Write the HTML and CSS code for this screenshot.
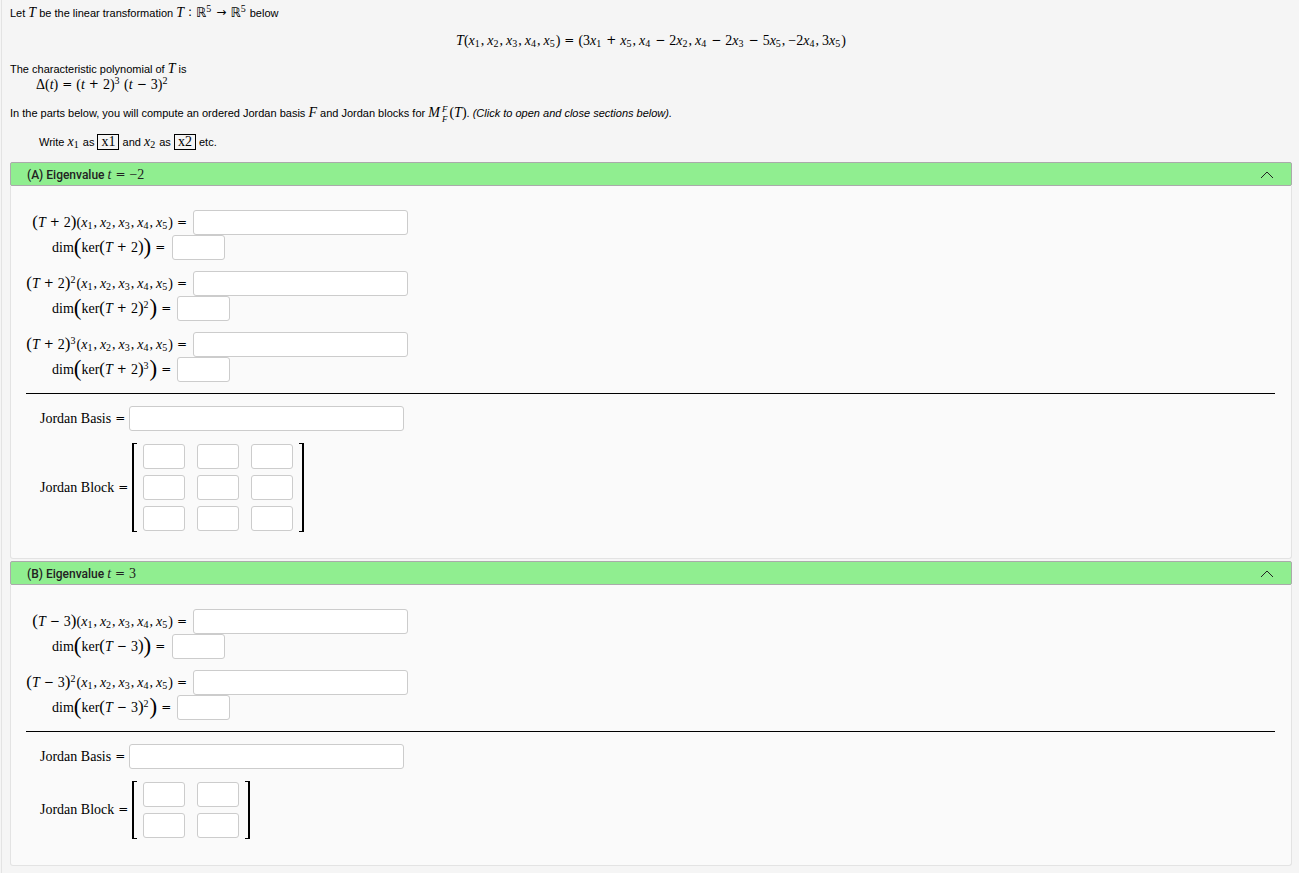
FILE: index.html
```html
<!DOCTYPE html>
<html lang="en">
<head>
    <meta charset="UTF-8">
    <meta name="viewport" content="width=device-width, initial-scale=1.0">
    <title>Jordan basis</title>
    <link rel="stylesheet" href="styles.css">
</head>
<body>
    <div class="problem">
        <p>Let <span class="math"><i>T</i></span> be the linear transformation <span class="math"><i>T</i><b>:</b><span class="bb">ℝ</span><sup>5</sup><b>→</b><span class="bb">ℝ</span><sup>5</sup></span> below</p>
        <p class="display"><span class="math"><i>T</i>(<i>x</i><sub>1</sub><u>,</u><i>x</i><sub>2</sub><u>,</u><i>x</i><sub>3</sub><u>,</u><i>x</i><sub>4</sub><u>,</u><i>x</i><sub>5</sub>)<b>=</b>(3<i>x</i><sub>1</sub><b>+</b><i>x</i><sub>5</sub><u>,</u><i>x</i><sub>4</sub><b>−</b>2<i>x</i><sub>2</sub><u>,</u><i>x</i><sub>4</sub><b>−</b>2<i>x</i><sub>3</sub><b>−</b>5<i>x</i><sub>5</sub><u>,</u>−2<i>x</i><sub>4</sub><u>,</u>3<i>x</i><sub>5</sub>)</span></p>
        <p>The characteristic polynomial of <span class="math"><i>T</i></span> is</p>
        <p class="poly"><span class="math">Δ(<i>t</i>)<b>=</b>(<i>t</i><b>+</b>2)<sup>3</sup> (<i>t</i><b>−</b>3)<sup>2</sup></span></p>
        <p class="parts">In the parts below, you will compute an ordered Jordan basis <span class="math"><i>F</i></span> and Jordan blocks for <span class="math"><i>M</i><span class="supsub"><i>F</i><i>F</i></span>(<i>T</i>)</span>. <em>(Click to open and close sections below).</em></p>
        <p class="hint">Write <span class="math"><i>x</i><sub>1</sub></span> as <span class="math boxed">x1</span> and <span class="math"><i>x</i><sub>2</sub></span> as <span class="math boxed">x2</span> etc.</p>

        <details open>
            <summary>
                <span>(A) Eigenvalue <span class="math"><i>t</i><b>=</b>−2</span></span>
                <svg class="arrow" viewBox="0 0 14 8"><path d="M1 7 L7 1 L13 7"/></svg>
            </summary>
            <div class="panel">
                <div class="group">
                    <div class="row">
                        <label class="math map" for="a1"><span class="big">(</span><i>T</i><b>+</b>2<span class="big">)</span>(<i>x</i><sub>1</sub><u>,</u><i>x</i><sub>2</sub><u>,</u><i>x</i><sub>3</sub><u>,</u><i>x</i><sub>4</sub><u>,</u><i>x</i><sub>5</sub>)<b>=</b></label>
                        <input type="text" id="a1" class="long">
                    </div>
                    <div class="row">
                        <label class="math dim" for="a1dim">dim<span class="huge">(</span>ker<span class="big">(</span><i>T</i><b>+</b>2<span class="big">)</span><span class="huge">)</span><b>=</b></label>
                        <input type="text" id="a1dim" class="short">
                    </div>
                </div>
                <div class="group">
                    <div class="row">
                        <label class="math map" for="a2"><span class="big">(</span><i>T</i><b>+</b>2<span class="big">)</span><sup>2</sup>(<i>x</i><sub>1</sub><u>,</u><i>x</i><sub>2</sub><u>,</u><i>x</i><sub>3</sub><u>,</u><i>x</i><sub>4</sub><u>,</u><i>x</i><sub>5</sub>)<b>=</b></label>
                        <input type="text" id="a2" class="long">
                    </div>
                    <div class="row">
                        <label class="math dim power" for="a2dim">dim<span class="huge">(</span>ker<span class="big">(</span><i>T</i><b>+</b>2<span class="big">)</span><sup>2</sup><span class="huge">)</span><b>=</b></label>
                        <input type="text" id="a2dim" class="short">
                    </div>
                </div>
                <div class="group">
                    <div class="row">
                        <label class="math map" for="a3"><span class="big">(</span><i>T</i><b>+</b>2<span class="big">)</span><sup>3</sup>(<i>x</i><sub>1</sub><u>,</u><i>x</i><sub>2</sub><u>,</u><i>x</i><sub>3</sub><u>,</u><i>x</i><sub>4</sub><u>,</u><i>x</i><sub>5</sub>)<b>=</b></label>
                        <input type="text" id="a3" class="long">
                    </div>
                    <div class="row">
                        <label class="math dim power" for="a3dim">dim<span class="huge">(</span>ker<span class="big">(</span><i>T</i><b>+</b>2<span class="big">)</span><sup>3</sup><span class="huge">)</span><b>=</b></label>
                        <input type="text" id="a3dim" class="short">
                    </div>
                </div>
                <hr>
                <div class="answer">
                    <label class="math" for="abasis">Jordan Basis<b>=</b></label>
                    <input type="text" id="abasis" class="basis">
                </div>
                <div class="answer">
                    <label class="math" for="a11">Jordan Block<b>=</b></label>
                    <div class="matrix">
                        <div class="cells three">
                            <input type="text" id="a11">
                            <input type="text" aria-label="Row 1 column 2">
                            <input type="text" aria-label="Row 1 column 3">
                            <input type="text" aria-label="Row 2 column 1">
                            <input type="text" aria-label="Row 2 column 2">
                            <input type="text" aria-label="Row 2 column 3">
                            <input type="text" aria-label="Row 3 column 1">
                            <input type="text" aria-label="Row 3 column 2">
                            <input type="text" aria-label="Row 3 column 3">
                        </div>
                    </div>
                </div>
            </div>
        </details>

        <details open>
            <summary>
                <span>(B) Eigenvalue <span class="math"><i>t</i><b>=</b>3</span></span>
                <svg class="arrow" viewBox="0 0 14 8"><path d="M1 7 L7 1 L13 7"/></svg>
            </summary>
            <div class="panel">
                <div class="group">
                    <div class="row">
                        <label class="math map" for="b1"><span class="big">(</span><i>T</i><b>−</b>3<span class="big">)</span>(<i>x</i><sub>1</sub><u>,</u><i>x</i><sub>2</sub><u>,</u><i>x</i><sub>3</sub><u>,</u><i>x</i><sub>4</sub><u>,</u><i>x</i><sub>5</sub>)<b>=</b></label>
                        <input type="text" id="b1" class="long">
                    </div>
                    <div class="row">
                        <label class="math dim" for="b1dim">dim<span class="huge">(</span>ker<span class="big">(</span><i>T</i><b>−</b>3<span class="big">)</span><span class="huge">)</span><b>=</b></label>
                        <input type="text" id="b1dim" class="short">
                    </div>
                </div>
                <div class="group">
                    <div class="row">
                        <label class="math map" for="b2"><span class="big">(</span><i>T</i><b>−</b>3<span class="big">)</span><sup>2</sup>(<i>x</i><sub>1</sub><u>,</u><i>x</i><sub>2</sub><u>,</u><i>x</i><sub>3</sub><u>,</u><i>x</i><sub>4</sub><u>,</u><i>x</i><sub>5</sub>)<b>=</b></label>
                        <input type="text" id="b2" class="long">
                    </div>
                    <div class="row">
                        <label class="math dim power" for="b2dim">dim<span class="huge">(</span>ker<span class="big">(</span><i>T</i><b>−</b>3<span class="big">)</span><sup>2</sup><span class="huge">)</span><b>=</b></label>
                        <input type="text" id="b2dim" class="short">
                    </div>
                </div>
                <hr>
                <div class="answer">
                    <label class="math" for="bbasis">Jordan Basis<b>=</b></label>
                    <input type="text" id="bbasis" class="basis">
                </div>
                <div class="answer">
                    <label class="math" for="b11">Jordan Block<b>=</b></label>
                    <div class="matrix">
                        <div class="cells two">
                            <input type="text" id="b11">
                            <input type="text" aria-label="Row 1 column 2">
                            <input type="text" aria-label="Row 2 column 1">
                            <input type="text" aria-label="Row 2 column 2">
                        </div>
                    </div>
                </div>
            </div>
        </details>
    </div>
</body>
</html>
```
FILE: styles.css
```css
*, *::before, *::after {
    box-sizing: border-box;
}
body {
    margin: 0;
    background-color: #f5f5f5;
    color: #000;
    font-family: "Liberation Sans", Arial, sans-serif;
    font-size: 11px;
    line-height: 16px;
}
.problem {
    margin-left: 1px;
    padding: 5px 7px 5px 8px;
    border-left: 1px solid #e3e3e3;
}
p {
    margin: 0;
}
.display {
    margin: 12px 0;
    text-align: center;
}
.poly {
    padding-left: 26px;
}
.parts {
    margin-top: 12px;
}
.hint {
    margin: 13px 0 12px;
    padding-left: 29px;
}

/* math */
.math {
    font-family: "Liberation Serif", "Times New Roman", serif;
    font-size: 14px;
    font-style: normal;
    font-weight: normal;
    white-space: nowrap;
}
.math b {
    margin: 0 4px;
    font-family: "DejaVu Sans", sans-serif;
    font-size: 12px;
    font-weight: normal;
    line-height: 0;
    vertical-align: 1px;
}
.math u {
    margin-right: 3px;
    text-decoration: none;
}
.math sub, .math sup {
    margin-right: 1px;
    font-size: 10px;
    line-height: 0;
}
.math sub {
    vertical-align: -2px;
}
.math sup {
    vertical-align: 5px;
}
.bb {
    font-family: "DejaVu Sans", sans-serif;
    font-size: 13px;
    line-height: 0;
}
.big {
    font-size: 17px;
    line-height: 0;
}
.huge {
    font-size: 23px;
    line-height: 0;
    vertical-align: -2px;
}
.supsub {
    display: inline-flex;
    flex-direction: column;
    margin: -4px 2px;
    font-size: 9px;
    line-height: 10px;
    vertical-align: middle;
}
.boxed {
    display: inline-block;
    padding: 0 3px;
    border: 1px solid #000;
    line-height: 14px;
}

/* sections */
details {
    margin-bottom: 2px;
}
summary {
    display: flex;
    justify-content: space-between;
    align-items: center;
    height: 24px;
    padding: 1px 17px 0 16px;
    border: 1px solid #aaa;
    border-radius: 2px;
    background-color: #90ee90;
    color: #222;
    font-family: Roboto, "Liberation Sans", sans-serif;
    font-size: 12px;
    font-weight: 500;
    cursor: pointer;
}
.arrow {
    width: 14px;
    height: 8px;
    fill: none;
    stroke: #222;
}
.panel {
    padding: 24px 16px 26px 15px;
    border: 1px solid #e3e3e3;
    border-top: none;
    border-radius: 0 0 3px 3px;
    background-color: #fafafa;
}
.group {
    margin-bottom: 11px;
}
.row {
    display: flex;
    align-items: center;
    gap: 6px;
}
.map {
    width: 161px;
    text-align: right;
}
.dim {
    width: 114px;
    margin-left: 26px;
}
.power {
    width: 119px;
}
label.math b:last-child {
    margin-right: 0;
}
input {
    height: 25px;
    margin: 0;
    padding: 2px 4px;
    border: 1px solid #ccc;
    border-radius: 3px;
    background-color: #fff;
    font-family: inherit;
    font-size: 12px;
}
.long {
    width: 215px;
}
.short {
    width: 53px;
}
.basis {
    width: 275px;
}
hr {
    margin: 0;
    border: none;
    border-top: 1px solid #000;
}
.answer {
    display: flex;
    align-items: center;
    margin-top: 12px;
    padding-left: 14px;
}
.answer label {
    width: 89px;
}
.matrix {
    display: flex;
    margin-left: 3px;
}
.matrix::before, .matrix::after {
    content: "";
    width: 5px;
    border: 1px solid #000;
}
.matrix::before {
    border-width: 1px 0 1px 2px;
}
.matrix::after {
    border-width: 1px 2px 1px 0;
}
.cells {
    display: grid;
    gap: 6px 12px;
    padding: 1px 6px;
}
.three {
    grid-template-columns: repeat(3, 42px);
}
.two {
    grid-template-columns: repeat(2, 42px);
}
.cells input {
    width: 100%;
}
```
